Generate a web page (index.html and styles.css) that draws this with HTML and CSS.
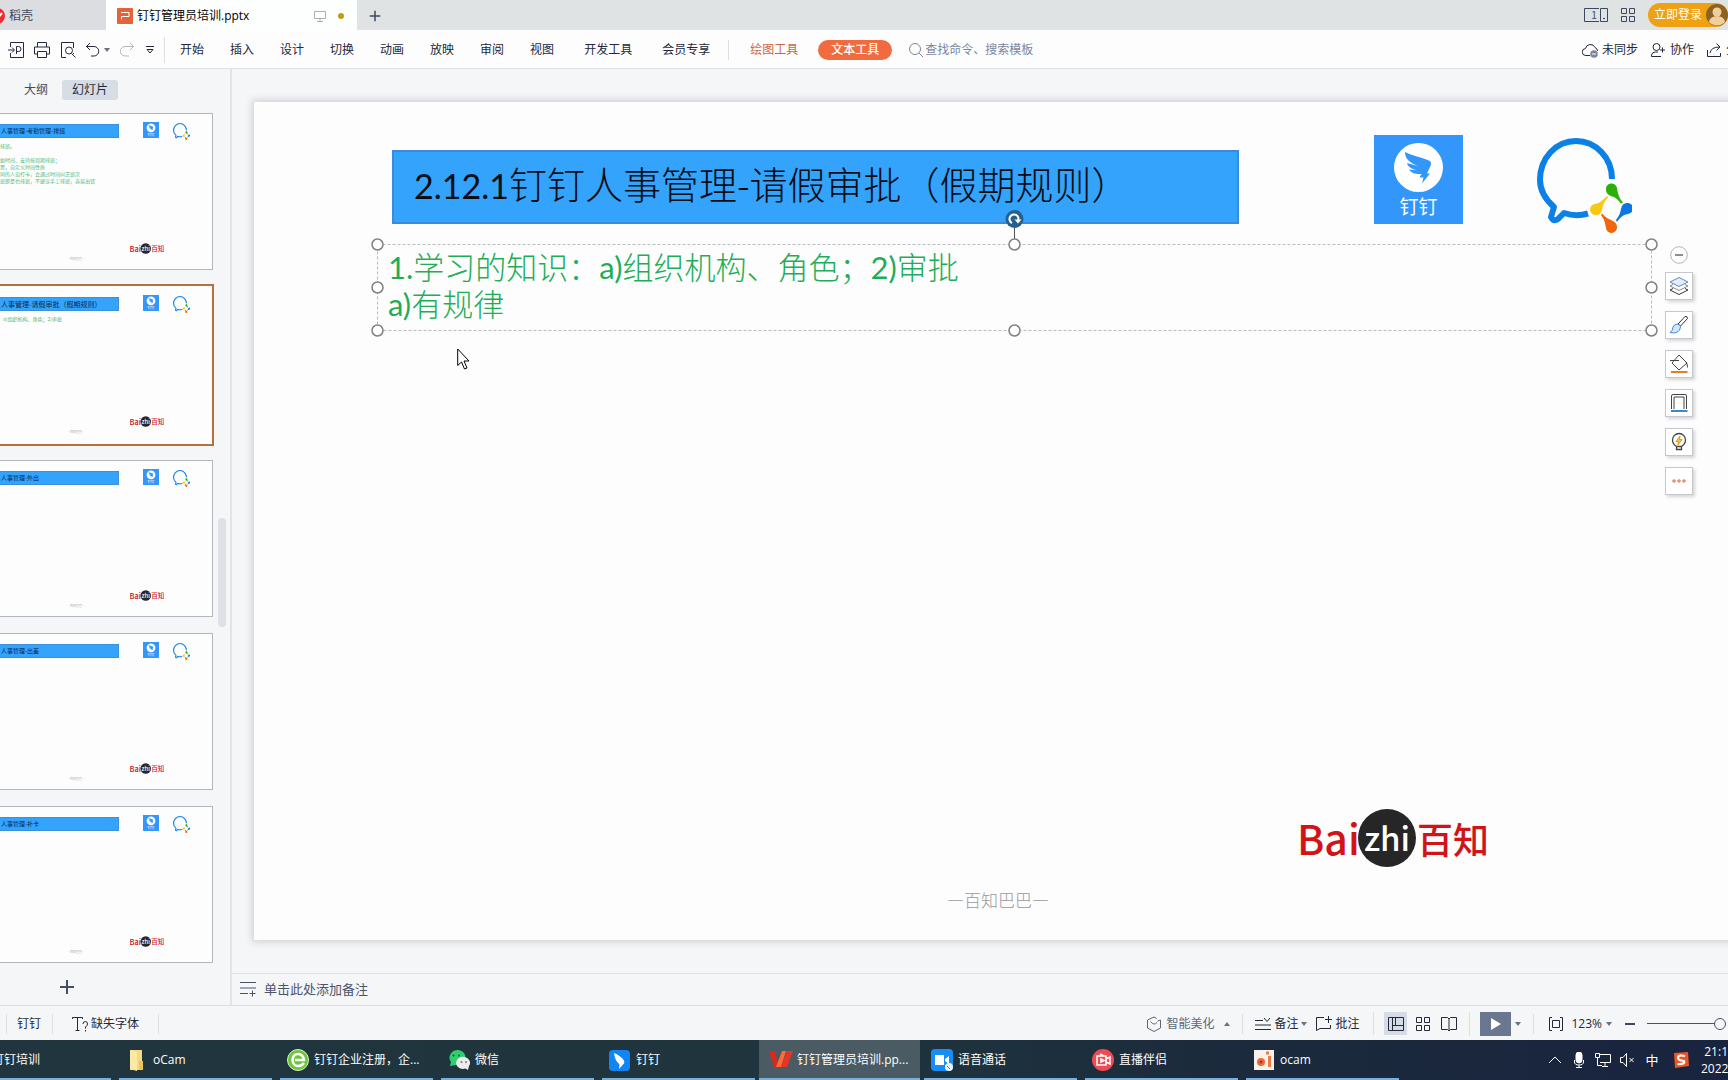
FILE: index.html
```html
<!DOCTYPE html>
<html lang="zh-CN">
<head>
<meta charset="utf-8">
<title>钉钉管理员培训.pptx</title>
<link rel="stylesheet" href="styles.css">
</head>
<body>
<svg class="defs" aria-hidden="true">
  <symbol id="ding" viewBox="0 0 89 89">
    <rect width="89" height="89" fill="#3296fa"/>
    <circle cx="44.5" cy="32.5" r="24.5" fill="#fff"/>
    <path d="M31 17C38 21 48 22 56 26Q58 28 56 32L53 38.500H56L48 48.500L49.500 42.500H45.500L47.500 39C42 39.500 37 38 35 34.500L43 35.200C38 34 34 32 33 28L44 31C36 28 31 24 31 17Z" fill="#3296fa"/>
    <text x="44.5" y="79" text-anchor="middle" font-size="19" fill="#fff">钉钉</text>
  </symbol>
  <symbol id="wecom" viewBox="0 0 95 95">
    <path d="M75 41C75 20 59 3 39 3S3 20 3 42C3 53 8 61 17 69L14 79Q16 84 21 81L27 75Q39 79 51 75.500" fill="none" stroke="#0b81e6" stroke-width="6" stroke-linejoin="round"/>
    <path d="M69 52A5.500 5.500 0 0 1 80 50C81 56 82 60 86 64.500L84 65.500C80 60 77 59 74 58Q69 56 69 52Z" fill="#2cae0b"/>
    <path d="M90 65A5.500 5.500 0 0 1 91 76C85 77 83 80 80 84L79 82C82 78 83 76 84 71Q85 65 90 65Z" fill="#0b76e0"/>
    <path d="M80 89A5.500 5.500 0 0 1 69 90C68 84 67 81 64 77L65 75.500C69 80 72 81 76 83Q80 85 80 89Z" fill="#f2650b"/>
    <path d="M59 77A5.500 5.500 0 0 1 58 66C63 65 66 62 70 58L71 59.500C67 64 66 67 65 72Q64 77 59 77Z" fill="#f9c911"/>
  </symbol>
  <symbol id="baizhi" viewBox="0 0 188 60">
    <g font-weight="500">
      <text x="-3" y="47" font-size="41" fill="#d01418">Bai</text>
      <circle cx="87" cy="30" r="29" fill="#262626"/>
      <text x="87" y="43" font-size="33" fill="#fff" text-anchor="middle">zhi</text>
      <text x="117" y="46" font-size="36" fill="#d01418">百知</text>
    </g>
  </symbol>
  <symbol id="grid" viewBox="0 0 16 16"><path d="M1.500 1.500h5v5h-5zM9.500 1.500h5v5h-5zM1.500 9.500h5v5h-5zM9.500 9.500h5v5h-5z"/></symbol>
  <symbol id="plus" viewBox="0 0 16 16"><path d="M8 1v14M1 8h14" stroke-width="2"/></symbol>
  <symbol id="caret" viewBox="0 0 6 4"><path d="M0 0h6L3 4z" fill="currentColor" stroke="none"/></symbol>
</svg>

<header class="tabs">
  <button class="tab tab-home"><svg class="dk" viewBox="0 0 16 16"><circle cx="8" cy="8" r="8" fill="#ea2d35"/><path d="M5 8l3 3 5-6" stroke="#fff" stroke-width="2"/></svg>稻壳</button>
  <button class="tab tab-doc">
    <svg class="i16" viewBox="0 0 16 16"><rect width="16" height="16" rx="1" fill="#e3643b"/><path d="M4 4.500h8v4H4.500v3" stroke="#fff"/></svg>
    <span>钉钉管理员培训.pptx</span>
    <svg class="i12 screen" viewBox="0 0 12 12"><path d="M.5 1.500h11v7H.5zM6 8.500v3M3 11.500h6" stroke="#a9adb6"/></svg>
    <i class="dot"></i>
  </button>
  <button class="new-tab" aria-label="新建"><svg class="i12" viewBox="0 0 16 16"><use href="#plus"/></svg></button>
  <div class="tabs-end">
    <svg class="panes" viewBox="0 0 24 14"><path d="M15 .5H.5v13H15M23.500 .5h-7v13h7zM19 10.500h2"/><text x="7" y="11" font-size="11" fill="#4a5468" stroke="none">1</text></svg>
    <svg class="i16"><use href="#grid"/></svg>
    <button class="login">立即登录<svg class="avatar" viewBox="0 0 22 22"><circle cx="11" cy="11" r="11" fill="#8a6224"/><circle cx="11" cy="8" r="4.500" fill="#f1cf9c"/><path d="M3 18a8 6 0 0 1 16 0a11 11 0 0 1-16 0z" fill="#f1cf9c"/></svg></button>
  </div>
</header>

<nav class="ribbon">
  <div class="quick">
    <button aria-label="输出"><svg class="i16" viewBox="0 0 16 16"><path d="M2.500 5V.5h13v15h-13V11M0 8h6M4 5.500L6.500 8L4 10.500M8.500 12V4.500h2a2 2 0 0 1 0 5h-2"/></svg></button>
    <button aria-label="打印"><svg class="i16" viewBox="0 0 16 16"><path d="M3.500 5V.5h9V5M3.500 12h-3V5h15v7h-3M3.500 9.500h9v6h-9z"/></svg></button>
    <button aria-label="预览"><svg class="i16" viewBox="0 0 16 16"><path d="M6 15.500H1.500V.5h12V6M13.500 11v1"/><circle cx="9" cy="8.500" r="3.500"/><path d="M11.500 11.500l4 4"/></svg></button>
    <button aria-label="撤销"><svg class="i16" viewBox="0 0 16 16"><path d="M4 1L.5 4.500L4 8M.5 4.500H8a4.700 4.700 0 0 1 0 9.500H5"/></svg><svg class="caret"><use href="#caret"/></svg></button>
    <button aria-label="恢复" class="off"><svg class="i16" viewBox="0 0 16 16"><path d="M10 1l3.500 3.500L10 8M13.500 4.500H5A4.700 4.700 0 0 0 5 14h4"/></svg></button>
    <button aria-label="更多"><svg class="i8" viewBox="0 0 8 8"><path d="M0 .5h8M1 3.500h6L4 7z"/></svg></button>
  </div>
  <div class="menu">
    <button>开始</button><button>插入</button><button>设计</button><button>切换</button><button>动画</button><button>放映</button><button>审阅</button><button>视图</button><button class="wide">开发工具</button><button class="wide">会员专享</button>
  </div>
  <div class="context">
    <button class="draw">绘图工具</button><button class="text-tools">文本工具</button>
    <label class="search"><svg class="i16" viewBox="0 0 16 16"><circle cx="7" cy="7" r="5.500"/><path d="M11 11l4 4"/></svg><input type="search" aria-label="查找" placeholder="查找命令、搜索模板"></label>
  </div>
  <div class="share">
    <button><svg class="i16" viewBox="0 0 16 16"><path d="M8 13.500H4A3.500 3.500 0 0 1 3.500 6.500A5 5 0 0 1 13 5.500Q15.500 6.500 15.500 9"/><circle cx="12" cy="12" r="3.800" fill="#7d869b" stroke="none"/><path d="M10 12h4" stroke="#fff"/></svg>未同步</button>
    <button><svg class="i16" viewBox="0 0 16 16"><circle cx="6.500" cy="5" r="3.500"/><path d="M11 14.500H1.500V13Q2 10 5.500 10H8M12.500 5.500v5M10 8h5"/></svg>协作</button>
    <button><svg class="i16" viewBox="0 0 16 16"><path d="M1.500 8v6.500h13V11M4 11Q5 5 13.500 5M10.500 1.500L14 5l-3.500 3.500"/></svg>分享</button>
  </div>
</nav>

<main class="work">
  <aside class="side">
    <div class="side-tabs"><button>大纲</button><button class="on">幻灯片</button></div>
    <div class="thumbs">
      <button class="thumb"><span class="t-band">人事管理-考勤管理-排班</span><span class="t-body">排班。<br><br>始时间、支持按周期排班；<br>置，自定义时间性质<br>同的人员打卡，会通过时间纠正班次<br>班即是也排班，不建议手工排班，容易出错</span><svg class="t-ding"><use href="#ding"/></svg><svg class="t-wecom"><use href="#wecom"/></svg><svg class="t-bai"><use href="#baizhi"/></svg><span class="t-foot">—百知巴巴—</span></button>
      <button class="thumb current"><span class="t-band">人事管理-请假审批（假期规则）</span><span class="t-body">a)组织机构、角色；2)审批</span><svg class="t-ding"><use href="#ding"/></svg><svg class="t-wecom"><use href="#wecom"/></svg><svg class="t-bai"><use href="#baizhi"/></svg><span class="t-foot">—百知巴巴—</span></button>
      <button class="thumb"><span class="t-band">人事管理-外出</span><svg class="t-ding"><use href="#ding"/></svg><svg class="t-wecom"><use href="#wecom"/></svg><svg class="t-bai"><use href="#baizhi"/></svg><span class="t-foot">—百知巴巴—</span></button>
      <button class="thumb"><span class="t-band">人事管理-出差</span><svg class="t-ding"><use href="#ding"/></svg><svg class="t-wecom"><use href="#wecom"/></svg><svg class="t-bai"><use href="#baizhi"/></svg><span class="t-foot">—百知巴巴—</span></button>
      <button class="thumb"><span class="t-band">人事管理-补卡</span><svg class="t-ding"><use href="#ding"/></svg><svg class="t-wecom"><use href="#wecom"/></svg><svg class="t-bai"><use href="#baizhi"/></svg><span class="t-foot">—百知巴巴—</span></button>
    </div>
    <button class="add" aria-label="新建幻灯片"><svg class="i16"><use href="#plus"/></svg></button>
    <i class="scroll"></i>
  </aside>

  <section class="editor">
    <div class="stage">
      <article class="slide">
        <h1 class="title"><span class="lat">2.12.1</span>钉钉人事管理-请假审批（假期规则）</h1>
        <svg class="logo-ding"><use href="#ding"/></svg>
        <svg class="logo-wecom"><use href="#wecom"/></svg>
        <p class="body"><span class="lat">1.</span>学习的知识：<span class="lat">a)</span>组织机构、角色；<span class="lat">2)</span>审批<br><span class="lat">a)</span>有规律</p>
        <svg class="frame" viewBox="0 0 1291 127">
          <rect x="8.500" y="34.500" width="1274" height="86" fill="none" stroke="#b9bbbd" stroke-dasharray="3 2"/>
          <path d="M645.500 16v18" stroke="#555"/>
          <g fill="#fff" stroke="#7e8082" stroke-width="1.500"><circle cx="8.500" cy="34.500" r="5.500"/><circle cx="645.500" cy="34.500" r="5.500"/><circle cx="1282.500" cy="34.500" r="5.500"/><circle cx="8.500" cy="77.500" r="5.500"/><circle cx="1282.500" cy="77.500" r="5.500"/><circle cx="8.500" cy="120.500" r="5.500"/><circle cx="645.500" cy="120.500" r="5.500"/><circle cx="1282.500" cy="120.500" r="5.500"/></g>
          <circle cx="645.500" cy="9" r="9" fill="#24618f"/><path d="M643 13a4.500 4.500 0 1 1 6-2" fill="none" stroke="#fff" stroke-width="2"/><path d="M645.500 9.500h7l-3.500 4z" fill="#fff"/>
        </svg>
        <svg class="logo-bai"><use href="#baizhi"/></svg>
        <p class="foot">—百知巴巴—</p>
        <svg class="pointer" viewBox="0 0 13 22"><path d="M.7 1v16.500l3.800-3.500l3 7l2.500-1l-3-7h5z" fill="#fff" stroke="#000"/></svg>
        <div class="tools">
          <button class="min" aria-label="收起"><svg viewBox="0 0 18 18"><circle cx="9" cy="9" r="8.300" fill="#fff" stroke="#b5b5b5"/><path d="M5 9h8" stroke="#8d8d8d" stroke-width="2"/></svg></button>
          <button aria-label="图层"><svg viewBox="0 0 20 20"><path d="M1 6l9-4.500L19 6l-9 4.500z" fill="#e3effb" stroke="#5b8ac6"/><path d="M4 8.500L1 10l9 4.500L19 10l-3-1.500" stroke="#888"/><path d="M4 12.500L1 14l9 4.500L19 14l-3-1.500" stroke="#333"/></svg></button>
          <button aria-label="格式"><svg viewBox="0 0 20 20"><path d="M9 9l7-7.500q2.500-.5 2.500 2L11.500 11z" stroke="#333"/><path d="M9 9Q5 9 4 12q0 4-3 5.500Q8 19 10.500 15q1-2 1-4z" fill="#d5e8fb" stroke="#4b86c9"/></svg></button>
          <button aria-label="填充"><svg viewBox="0 0 20 20"><path d="M10 1l8 8l-8 7l-7-7zM1 6.500h9M16.500 8q2 0 2 5.500" stroke="#444"/><path d="M2 18h16.500" stroke="#d98330" stroke-width="2"/></svg></button>
          <button aria-label="轮廓"><svg viewBox="0 0 20 20"><path d="M2.500 16V3q0-1.500 1.500-1.500h12q1.500 0 1.500 1.500v13M5 16V4h10v12" stroke="#444"/><path d="M2 18h16.500" stroke="#3d87c2" stroke-width="2"/></svg></button>
          <button aria-label="灵感"><svg viewBox="0 0 20 20"><path d="M7.500 14.500Q3.500 12 3.500 8a6.500 6.500 0 0 1 13 0q0 4-4 6.500zM7.500 14.500v3h5v-3" stroke="#444" stroke-width="1.300"/><path d="M11 4L7 9.500h2.500L9 13l4-5.500h-2.500z" fill="#f8c63a" stroke="#dd9d1c"/></svg></button>
          <button aria-label="更多"><svg viewBox="0 0 20 20"><g stroke="#d3623a"><circle cx="5" cy="10" r="1.200"/><circle cx="10" cy="10" r="1.200"/><circle cx="15" cy="10" r="1.200"/></g></svg></button>
        </div>
      </article>
    </div>
    <div class="notes"><svg class="i16" viewBox="0 0 16 16"><path d="M0 1.500h16M0 7h16M0 12.500h8M12.500 9.500v6M9.500 12.500h6"/></svg>单击此处添加备注</div>
  </section>
</main>

<footer class="status">
  <div class="st-left"><span>钉钉</span><button><svg class="i16" viewBox="0 0 16 16"><path d="M.5 3V1.500h10V3M5.500 1.500v13M3.500 14.500h4M11 8q0-2.500 2.300-2.500T15.500 8q0 1.500-2 3v1.500M13.500 14v1.500"/></svg>缺失字体</button></div>
  <div class="st-right">
    <button class="beauty"><svg class="i16" viewBox="0 0 16 16"><path d="M8 1L1.500 4v8L8 15.500L14.500 12V4M4.500 5.500Q8 10 11 6.500M8 1l2.500 1.500M11.500 5l3-1"/></svg>智能美化<svg class="caret up"><use href="#caret"/></svg></button>
    <div class="grp remarks"><button><svg class="i16" viewBox="0 0 16 16"><path d="M0 4.500h8M0 9h16M0 13.500h16M9 2l3 3.500L15 2"/></svg>备注<svg class="caret"><use href="#caret"/></svg></button><button><svg class="i16" viewBox="0 0 16 16"><path d="M8 1.500H.5v13L4 12.500h10.500V9M12.500 0v7M9 3.500h7"/></svg>批注</button></div>
    <div class="grp views"><button class="on" aria-label="普通"><svg class="i16" viewBox="0 0 16 16"><path d="M.5 1.500h15v13H.5zM4.500 1.500v13M7.500 1.500v8M4.500 9.500h11"/></svg></button><button aria-label="浏览"><svg class="i16"><use href="#grid"/></svg></button><button aria-label="阅读"><svg class="i16" viewBox="0 0 16 16"><path d="M8 3L6.500 1.500H.5v12h6L8 15l1.500-1.500h6v-12h-6zM8 3v12"/></svg></button></div>
    <div class="grp playgrp"><button class="play" aria-label="放映"><svg viewBox="0 0 10 12"><path d="M0 0l10 6L0 12z" fill="#fff" stroke="none"/></svg></button><svg class="caret"><use href="#caret"/></svg></div>
    <div class="grp zoomgrp"><svg class="i16" viewBox="0 0 16 16"><path d="M4 1.500H1.500V14.500H4M12 1.500h2.500v13H12M4.500 4.500h7v7h-7z"/></svg><button class="pct">123%<svg class="caret"><use href="#caret"/></svg></button><button class="less" aria-label="缩小"></button><input class="range" type="range" aria-label="缩放" min="0" max="100" value="100"></div>
  </div>
</footer>

<div class="taskbar">
  <div class="apps">
    <button><i class="ico"></i>钉钉培训</button>
    <button><svg class="ico" viewBox="0 0 24 24"><path d="M5 2h12v20H5z" fill="#f7da80"/><path d="M5 2l7 2v19l-7-2z" fill="#fbe9a8"/><path d="M14 13h4v9h-4z" fill="#eec35a"/></svg>oCam</button>
    <button><svg class="ico" viewBox="0 0 24 24"><circle cx="12" cy="12" r="10.500" fill="#6cc53a" stroke="#d9f5c3"/><path d="M18 15q-2 3-6 3-5 0-5.500-6 .5-6 5.500-6 5 0 6 6H9" stroke="#fff" stroke-width="2.500"/></svg>钉钉企业注册，企...</button>
    <button><svg class="ico" viewBox="0 0 24 24"><path d="M3 18l1-4A8 7.500 0 1 1 9 17z" fill="#2fcf6d"/><circle cx="6.500" cy="7.500" r="1" fill="#155"/><circle cx="12" cy="7.500" r="1" fill="#155"/><path d="M21 22l-2.500-1.500A7 6 0 1 1 22 18z" fill="#ececec"/><circle cx="14.500" cy="14" r="1" fill="#777"/><circle cx="19" cy="14" r="1" fill="#777"/></svg>微信</button>
    <button><svg class="ico" viewBox="0 0 24 24"><rect x="1" y="2" width="21" height="21" rx="4" fill="#1285f5"/><path d="M6 5q7 3 10 7.500 1 2-1 4l-4 4.500 .5-4.500Q7 13 6 5z" fill="#fff"/></svg>钉钉</button>
    <button class="active"><svg class="ico" viewBox="0 0 24 24"><path d="M0 3h6l4 16H5z" fill="#d9291f"/><path d="M7 19L13 3h4l-5 16z" fill="#ff6b35"/><path d="M12 19L18 3h6l-6 16z" fill="#e73524"/></svg>钉钉管理员培训.pp...</button>
    <button><svg class="ico" viewBox="0 0 24 24"><rect x="1" y="1" width="22" height="22" rx="4" fill="#168df7"/><path d="M5 7h9v10H5zM15 11l4-3v8l-4-3z" fill="#fff"/><circle cx="19" cy="19" r="4" fill="#e8f4ff"/><path d="M17 18l3 3" stroke="#168df7"/></svg>语音通话</button>
    <button><svg class="ico" viewBox="0 0 24 24"><circle cx="12" cy="12" r="11" fill="#f04a55"/><path d="M6 8h9v9H6zM15 11l4-2v7l-4-2zM9 6l4 2M10 11v3l3-1.500z" stroke="#fff" stroke-width="1.500"/></svg>直播伴侣</button>
    <button><svg class="ico" viewBox="0 0 24 24"><rect x="2" y="2" width="20" height="20" fill="#f8f1ec"/><circle cx="9" cy="14" r="4" fill="#ee6a36"/><circle cx="9" cy="14" r="1.500" fill="#a33"/><path d="M17.500 8v11M14 5h3" stroke="#ee7a46" stroke-width="3"/></svg>ocam</button>
  </div>
  <div class="tray">
    <svg class="i16" viewBox="0 0 16 16"><path d="M2 11l6-6 6 6"/></svg>
    <svg class="i16" viewBox="0 0 16 16"><rect x="5" y="0" width="6" height="11" rx="3" fill="#fff"/><path d="M3.500 8v2q0 3 4.500 3t4.500-3V8M8 13v3M5 15.500h6"/></svg>
    <svg class="i16" viewBox="0 0 16 16"><path d="M5 2.500h10.500v8H5M.5 1.500h4v4h-4zM2.500 5.500v8H7M10 10.500v4M7 14.500h6"/></svg>
    <svg class="i16" viewBox="0 0 16 16"><path d="M1.500 5.500H4l3.500-4v13L4 10.500H1.500zM10.500 6l4 4M14.500 6l-4 4"/></svg>
    <span class="ime">中</span>
    <svg class="i16" viewBox="0 0 16 16"><path d="M1 1l14-1 1 14-14 2z" fill="#ef5522" stroke="none"/><path d="M12 4Q5 2.500 5 5.500T11 9q1.500 3.500-6.500 3" stroke="#fff" stroke-width="2.200"/></svg>
    <time class="clock"><span>21:1</span><span>2022</span></time>
  </div>
</div>
</body>
</html>
```
FILE: styles.css
```css
* { box-sizing: border-box; }
body {
  margin: 0;
  height: 100vh;
  display: flex;
  flex-direction: column;
  overflow: hidden;
  background: #f4f6f8;
  color: #23283a;
  font: 12px/20px "Open Sans", "Noto Sans CJK SC", sans-serif;
}
button, input { font: inherit; color: inherit; border: 0; padding: 0; background: none; white-space: nowrap; }
button { display: flex; align-items: center; }
svg { fill: none; stroke: currentColor; flex: none; display: block; }
svg text, symbol text { stroke: none; font-family: "Noto Sans CJK SC", sans-serif; }
symbol circle, symbol rect { stroke: none; }
#ding, #baizhi, #wecom { stroke: none; }
svg.defs { display: none; }
.i16 { width: 16px; height: 16px; }
.i12 { width: 12px; height: 12px; }
.i8 { width: 8px; height: 8px; }
.caret { width: 6px; height: 4px; color: #6b7080; }
.up { transform: rotate(180deg); }

/* document tabs */
.tabs { display: flex; height: 30px; flex: none; background: #dfe3e4; color: #3e485c; }
.tab-home { width: 106px; background: #dbdde0; gap: 4px; }
.dk { width: 16px; height: 16px; margin-left: -11px; stroke: none; }
.tab-doc { width: 251px; padding-left: 11px; gap: 4px; background: #fdfefe; color: #000; }
.tab-doc .screen { margin-left: auto; }
.tab-doc rect { stroke: none; }
.dot { width: 6px; height: 6px; margin: 0 13px 0 8px; border-radius: 50%; background: #c29a1a; }
.new-tab { padding-left: 12px; }
.tabs button { padding-top: 1px; }
.tabs-end { margin-left: auto; display: flex; align-items: center; gap: 12px; }
.panes { width: 24px; height: 14px; overflow: visible; }
.tabs .login { height: 24px; gap: 4px; padding: 0 0 0 6px; border-radius: 12px; background: #eea112; color: #fff; }
.avatar { width: 22px; height: 22px; stroke: none; }

/* menu row */
.ribbon { display: flex; align-items: center; height: 39px; flex: none; padding-top: 1px; background: #fdfdfe; border-bottom: 1px solid #dfe2e5; }
.quick { display: flex; align-items: center; gap: 10px; width: 165px; height: 26px; padding-left: 8px; border-right: 1px solid #dcdfe4; }
.quick button { gap: 2px; }
.off { color: #b3b7bf; }
.menu { display: flex; gap: 26px; padding: 0 18px 0 15px; border-right: 1px solid #dcdfe4; }
.wide { margin-left: 4px; }
.context { display: flex; align-items: center; padding-left: 21px; }
.draw { color: #d0643f; }
.text-tools { margin: 0 16px 0 20px; padding: 0 13px; border-radius: 10px; background: #f06c40; color: #fff; font-weight: 500; }
.search { display: flex; align-items: center; gap: 1px; color: #7b869c; }
.search input { width: 150px; outline: 0; }
.search input::placeholder { color: #7b869c; opacity: 1; }
.share { display: flex; gap: 12px; margin-left: auto; margin-right: -22px; flex: none; }
.share button { gap: 4px; }

/* slide list */
.work { flex: 1; display: flex; min-height: 0; }
.side { position: relative; width: 232px; flex: none; display: flex; flex-direction: column; border-right: 2px solid #e2e4e7; }
.side-tabs { display: flex; gap: 14px; padding: 11px 0 13px 24px; color: #454c5e; }
.side-tabs .on { padding: 0 10px; border-radius: 3px; background: #d6dde5; color: #23283a; }
.thumbs { display: flex; flex-direction: column; gap: 16px; width: 213px; }
.thumb { position: relative; height: 157px; overflow: hidden; background: #fdfdfe; border: 1px solid #b2b7be; border-left: 0; }
.current { height: 158px; margin-right: 1px; border-color: transparent; outline: 2px solid #b9703f; }
.t-band { position: absolute; left: 0; top: 10px; width: 119px; height: 14px; padding-left: 1px; background: #33a3fb; border: 1px solid #3b8fdc; border-left: 0; color: #08294f; font: 400 6px/12px "Noto Sans CJK SC", sans-serif; text-align: left; }
.current .t-band { font-size: 7px; }
.t-body { position: absolute; left: 0; top: 28px; color: #4fb97b; font: 400 5px/7px "Noto Sans CJK SC", sans-serif; text-align: left; }
.current .t-body { left: 3px; }
.t-ding { position: absolute; left: 143px; top: 8px; width: 16px; height: 16px; }
.t-wecom { position: absolute; left: 173px; top: 9px; width: 17px; height: 17px; }
.t-bai { position: absolute; left: 130px; top: 129px; width: 34px; height: 11px; }
.t-foot { position: absolute; left: 67px; top: 143px; color: #aaa; font: 3px/5px "Noto Sans CJK SC", sans-serif; }
.add { padding: 16px 59px; color: #454d66; }
.scroll { position: absolute; right: 4px; top: 449px; width: 8px; height: 109px; border-radius: 4px; background: #dde0e4; }

/* editing stage */
.editor { flex: 1; min-width: 0; display: flex; flex-direction: column; }
.stage { flex: 1; min-height: 0; overflow: hidden; padding: 33px 0 0 22px; }
.slide { position: relative; width: 1490px; height: 838px; background: #fdfdfe; box-shadow: 0 0 7px 2px #cfd1d3; }
.slide > svg, .slide > p, .title, .tools { position: absolute; margin: 0; }
.lat { font-family: Lato, sans-serif; line-height: 1; }
.title { left: 138px; top: 48px; width: 847px; height: 74px; padding-left: 20px; background: #33a3fb; border: 2px solid #3b8bdc; color: #0a0d14; font: 300 38px/62px "Noto Sans CJK SC", sans-serif; }
.title .lat { font-size: 34px; font-weight: 400; }
.logo-ding { left: 1120px; top: 33px; width: 89px; height: 89px; }
.logo-wecom { left: 1283px; top: 36px; width: 95px; height: 95px; }
.slide > .body { left: 134px; top: 145px; color: #1fae57; font: 300 31px/37px "Noto Sans CJK SC", sans-serif; }
.body .lat { font-size: 31px; font-weight: 400; }
.frame { left: 115px; top: 108px; width: 1291px; height: 127px; stroke: none; }
.logo-bai { left: 1046px; top: 706px; width: 188px; height: 60px; }
.slide > .foot { left: 693px; top: 788px; color: #999; font: 300 17px/20px "Noto Sans CJK SC", sans-serif; }
.pointer { left: 203px; top: 246px; width: 13px; height: 22px; }
.tools { left: 1411px; top: 144px; display: flex; flex-direction: column; align-items: center; gap: 11px; }
.tools button { width: 28px; height: 28px; justify-content: center; background: #fff; border: 1px solid #c5c8cc; box-shadow: 2px 2px 3px #d5d5d5; }
.tools svg { width: 20px; height: 20px; stroke: none; }
.tools .min { width: 18px; height: 18px; margin-bottom: -3px; border: 0; background: none; box-shadow: none; }
.tools .min svg { width: 18px; height: 18px; }
.notes { display: flex; align-items: center; gap: 8px; height: 32px; padding: 0 0 2px 8px; border-top: 1px solid #e0e3e6; color: #4c546b; font-size: 13px; }

/* status bar */
.status { display: flex; justify-content: space-between; height: 35px; flex: none; padding-top: 1px; border-top: 1px solid #dcdfe2; }
.st-left, .st-right, .grp { display: flex; align-items: center; }
.st-left > * { padding: 0 11px; border-right: 1px solid #dcdfe4; }
.st-left span { margin-left: 6px; border-left: 1px solid #dcdfe4; padding-left: 10px; }
.st-left button { gap: 3px; padding: 0 19px; }
.beauty { gap: 4px; padding-right: 12px; color: #5f6675; }
.beauty .caret { margin-left: 6px; }
.grp { border-left: 1px solid #dcdfe4; padding: 0 12px; gap: 8px; }
.grp button { gap: 3px; }
.remarks { padding-right: 14px; gap: 9px; }
.views { padding: 0 10px; gap: 6px; }
.views button { width: 20px; justify-content: center; }
.views .on { width: 23px; height: 23px; background: #d6dce5; }
.playgrp { padding: 0 12px 0 10px; gap: 4px; }
.play { width: 31px; height: 24px; justify-content: center; background: #6b7690; }
.play svg { width: 10px; height: 12px; }
.zoomgrp { padding: 0 2px 0 14px; gap: 7px; }
.zoomgrp .pct { gap: 4px; }
.less { width: 10px; height: 2px; margin: 0 5px 0 6px; background: #3f4760; }
.range { width: 79px; height: 14px; margin: 0; appearance: none; background: linear-gradient(#4a5268, #4a5268) 0 50% / 68px 1px no-repeat; }
.range::-webkit-slider-thumb { appearance: none; width: 12px; height: 12px; border: 1px solid #4a5268; border-radius: 50%; background: #f4f6f8; }

/* system taskbar */
.taskbar { display: flex; justify-content: space-between; height: 40px; flex: none; background: linear-gradient(90deg, #20353d, #1f343e 50%, #1b2a3c 72%, #19243f); color: #fff; }
.apps { display: flex; margin-left: -46px; }
.apps button { position: relative; width: 161px; padding-left: 10px; gap: 4px; }
.apps button::after { content: ""; position: absolute; left: 4px; right: 4px; bottom: 0; height: 2px; background: #78b0de; }
.apps .active { background: #4a5b63; }
.apps .active::after { left: 0; right: 0; }
.ico { width: 24px; height: 24px; stroke: none; }
.tray { display: flex; align-items: center; gap: 8px; }
.ime { width: 16px; font-size: 13px; text-align: center; margin: 0 5px 0 1px; }
.clock { display: flex; flex-direction: column; width: 27px; margin-left: 4px; line-height: 17px; text-align: right; white-space: nowrap; }
```
